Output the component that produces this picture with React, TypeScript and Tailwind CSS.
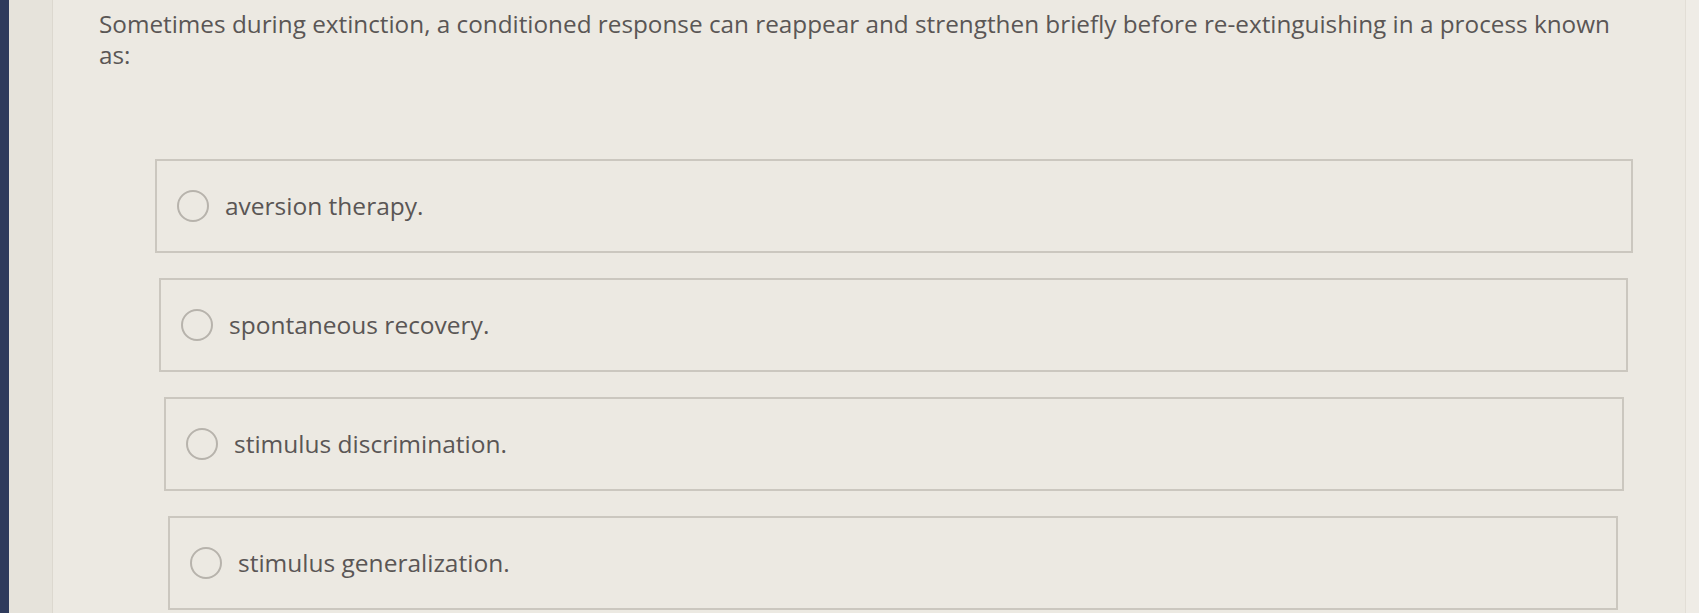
import React from 'react';

const options = [
  { label: 'aversion therapy.', box: 'ml-[102px] mr-[52px]' },
  { label: 'spontaneous recovery.', box: 'ml-[106px] mr-[57px]' },
  { label: 'stimulus discrimination.', box: 'ml-[111px] mr-[61px]' },
  { label: 'stimulus generalization.', box: 'ml-[115px] mr-[67px]' },
];

const Radio = () => (
  <span className="block w-[32px] h-[32px] shrink-0 rounded-full border-2 border-[#b7b3ac]" />
);

const App = () => {
  return (
    <div
      className="flex w-full h-[613px] overflow-hidden bg-[#ebe8e1] text-[#5a5655]"
      style={{ fontFamily: '"Open Sans", "Noto Sans", sans-serif' }}
    >
      {/* screen bezel and left gutter */}
      <div className="w-[9px] shrink-0 bg-[#2f3b5c]" />
      <div className="w-[44px] shrink-0 bg-[#e6e3db] border-r border-[#dcd8cf]" />

      <main className="flex-1 min-w-0 bg-[#ece9e2]">
        <p className="pl-[46px] pr-[55px] pt-[8px] text-[24.3px] leading-[31px]">
          Sometimes during extinction, a conditioned response can reappear and strengthen briefly before
          re-extinguishing in a process known as:
        </p>

        <div className="mt-[89px] flex flex-col gap-[25px]">
          {options.map((o) => (
            <label
              key={o.label}
              className={`flex items-center h-[94px] border-2 border-[#cbc7bf] pl-[20px] ${o.box}`}
            >
              <Radio />
              <span className="ml-[16px] text-[24.5px] leading-none">{o.label}</span>
            </label>
          ))}
        </div>
      </main>

      {/* right edge of the display */}
      <div className="w-[14px] shrink-0 bg-[#efece6] border-l border-[#e2ded6]" />
    </div>
  );
};

export default App;
